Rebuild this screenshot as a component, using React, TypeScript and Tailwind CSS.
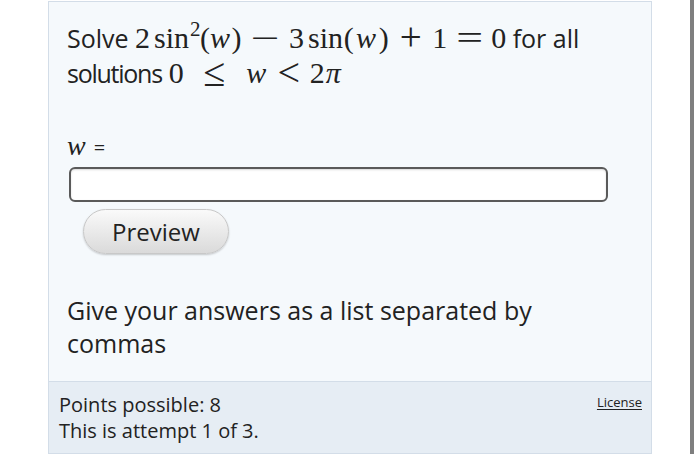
const sans = "font-['Open_Sans','Noto_Sans',sans-serif]"
const serif = "font-['Liberation_Serif','DejaVu_Serif',serif]"

// a fixed-width box for one math glyph, so spacing comes out like the typeset formula
function G({ w, children, className = '' }: { w: string; children: React.ReactNode; className?: string }) {
  return <span className={`inline-block text-center ${w} ${className}`}>{children}</span>
}

// operators are drawn a bit larger than the serif font gives them
function Op({ w, children, className }: { w: string; children: React.ReactNode; className: string }) {
  return (
    <span className={`inline-block text-center ${w}`}>
      <span className={`relative inline-block leading-[20px] ${className}`}>{children}</span>
    </span>
  )
}

function Math({ children }: { children: React.ReactNode }) {
  return <span className={`${serif} text-[30px] leading-none whitespace-nowrap`}>{children}</span>
}

export default function App() {
  return (
    <div className={`flex h-[454px] w-[700px] overflow-hidden bg-white text-[#222] ${sans}`}>
      <div className="w-[48px] shrink-0" />

      {/* question panel */}
      <div className="mt-[1px] flex w-[604px] shrink-0 flex-col border border-[#d3dde8] bg-[#f5f9fc]">
        <div className="px-[18px] pt-[19px] pb-[21px]">
          <p className="text-[25px] leading-[35px]">
            Solve{' '}
            <Math>
              <G w="w-[15px]">2</G>
              <span className="ml-[4px]">sin</span>
              <G w="w-[10px]" className="relative -top-[12px] ml-[1px] text-[21px]">2</G>
              <G w="w-[9px]">(</G>
              <G w="w-[22px]" className="italic">w</G>
              <G w="w-[11px]">)</G>
              <Op w="w-[47px]" className="scale-x-[1.7]">−</Op>
              <G w="w-[15px]">3</G>
              <span className="ml-[4px]">sin</span>
              <G w="w-[11px]">(</G>
              <G w="w-[24px]" className="italic">w</G>
              <G w="w-[11px]">)</G>
              <Op w="w-[43px]" className="top-[2px] text-[39px]">+</Op>
              <G w="w-[15px]">1</G>
              <Op w="w-[44px]" className="top-[1px] scale-x-[1.4] text-[34px]">=</Op>
              <G w="w-[15px]">0</G>
            </Math>{' '}
            for all
            <br />
            <span className="tracking-[-0.05em]">solutions</span>{' '}
            <Math>
              <G w="w-[16px]">0</G>
              <Op w="w-[60px]" className="top-[3px] text-[40px]">≤</Op>
              <G w="w-[24px]" className="italic">w</G>
              <Op w="w-[41px]" className="top-[3px] text-[40px]">&lt;</Op>
              <G w="w-[16px]">2</G>
              <G w="w-[16px]" className="italic">π</G>
            </Math>
          </p>

          <div className="mt-[46px] text-[17px] leading-[24px]">
            <span className={`${serif} text-[28px] leading-[16px] italic`}>w</span>
            <span className="ml-[8px] text-[20px] leading-[16px]">=</span>
          </div>

          <div className="mt-[6px] ml-[2px] h-[35px] w-[539px] rounded-[6px] border-2 border-[#5a5a5a] bg-white shadow-[inset_0_1px_2px_rgba(0,0,0,0.15)]" />

          <button className="mt-[7px] ml-[16px] flex h-[45px] w-[146px] items-center justify-center rounded-full border border-[#c8c8c8] bg-gradient-to-b from-[#fafafa] to-[#dadada] text-[24px] text-[#222] shadow-[0_1px_2px_rgba(0,0,0,0.2)]">
            Preview
          </button>

          <p className="mt-[40px] text-[25px] leading-[33px] text-[#222]">
            Give your answers as a list separated by
            <br />
            commas
          </p>
        </div>

        {/* footer */}
        <div className="flex flex-1 justify-between border-t border-[#d3dde8] bg-[#e6edf4] pl-[10px] pr-[9px] pt-[10px]">
          <div className="text-[20px] leading-[26px]">
            <div>Points possible: 8</div>
            <div>This is attempt 1 of 3.</div>
          </div>
          <a className="mt-[1px] text-[13px] leading-[18px] text-[#222] underline underline-offset-2">License</a>
        </div>
      </div>

      <div className="w-[38px] shrink-0" />
      <div className="w-[4px] shrink-0 bg-[#7f7f7f]" />
    </div>
  )
}
